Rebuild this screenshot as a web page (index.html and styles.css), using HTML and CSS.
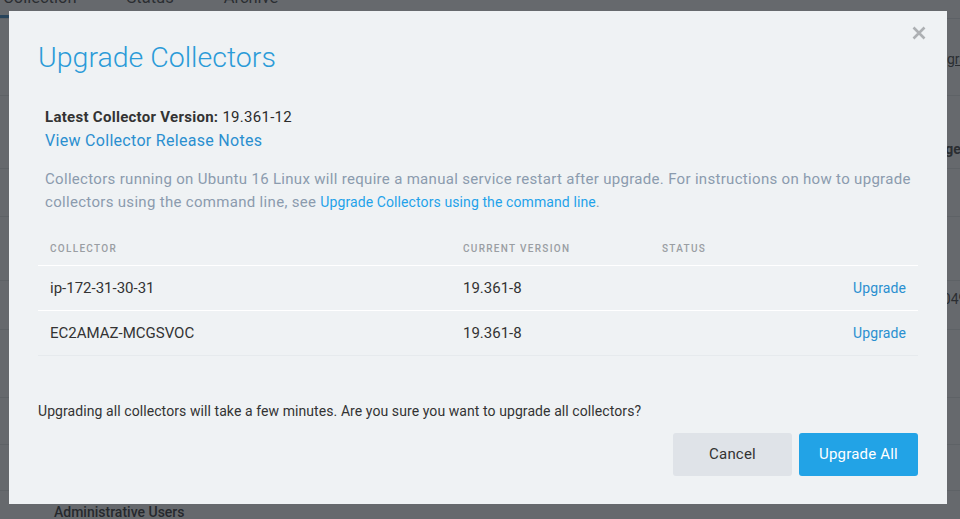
FILE: index.html
```html
<!DOCTYPE html>
<html>
<head>
<meta charset="utf-8">
<link rel="stylesheet" href="styles.css">
</head>
<body>
<div class="page">
  <div class="tabs">
    <span class="tab active">Collection</span>
    <span class="tab">Status</span>
    <span class="tab">Archive</span>
  </div>
  <div class="bg-rows">
    <div class="bg-row r1"><span>Upgrade</span></div>
    <div class="bg-row r2"><span>Changes</span></div>
    <div class="bg-row r3"></div>
    <div class="bg-row r4"></div>
    <div class="bg-row r5"><span>2049</span></div>
    <div class="bg-row r6"></div>
    <div class="bg-row r7"></div>
    <div class="bg-row r8"></div>
  </div>
  <div class="bg-footer">Administrative Users</div>
</div>

<div class="overlay"></div>

<div class="modal">
  <button class="close" aria-label="Close">
    <svg width="14" height="14" viewBox="0 0 14 14"><path d="M1.5 1.5L12.5 12.5M12.5 1.5L1.5 12.5" stroke="#adb0b3" stroke-width="2.6" stroke-linecap="butt"/></svg>
  </button>
  <h1 class="title">Upgrade Collectors</h1>
  <div class="info">
    <div class="version"><b>Latest Collector Version:</b> 19.361-12</div>
    <a class="link big">View Collector Release Notes</a>
    <p class="note">Collectors running on Ubuntu 16 Linux will require a manual service restart after upgrade. For instructions on how to upgrade collectors using the command line, see <a class="link small">Upgrade Collectors using the command line</a>.</p>
  </div>
  <table class="table">
    <thead>
      <tr><th class="c1">Collector</th><th class="c2">Current Version</th><th class="c3">Status</th><th class="c4"></th></tr>
    </thead>
    <tbody>
      <tr><td>ip-172-31-30-31</td><td>19.361-8</td><td></td><td class="act"><a class="link">Upgrade</a></td></tr>
      <tr class="last"><td>EC2AMAZ-MCGSVOC</td><td>19.361-8</td><td></td><td class="act"><a class="link">Upgrade</a></td></tr>
    </tbody>
  </table>
  <p class="confirm">Upgrading all collectors will take a few minutes. Are you sure you want to upgrade all collectors?</p>
  <div class="actions">
    <button class="btn cancel">Cancel</button>
    <button class="btn primary">Upgrade All</button>
  </div>
</div>
</body>
</html>
```

FILE: styles.css
```css
* { box-sizing: border-box; }
html, body { margin: 0; padding: 0; }
body {
  width: 960px;
  height: 519px;
  overflow: hidden;
  font-family: Roboto, "Liberation Sans", sans-serif;
  background: #ffffff;
  position: relative;
}
.page {
  height: 519px;
  display: flex;
  flex-direction: column;
}
.tabs {
  display: flex;
  gap: 50px;
  height: 20px;
  padding-left: 3px;
  border-bottom: 1px solid #dfe2e5;
  align-items: flex-start;
}
.tab {
  font-size: 16.5px;
  color: #333;
  line-height: 12px;
  margin-top: -8px;
  height: 26px;
  border-bottom: 3px solid transparent;
}
.tab.active { border-bottom-color: #2a7fc0; margin-left: -3px; padding-left: 3px; }
.bg-rows {
  display: flex;
  flex-direction: column;
}
.bg-row {
  border-bottom: 1px solid #e2e5e8;
  font-size: 14px;
  color: #333;
  display: flex;
  align-items: center;
  white-space: nowrap;
}
.bg-row.r1 { height: 77px; padding-top: 4px; }
.bg-row.r1 span { margin-left: 930px; text-decoration: underline; }
.bg-row.r2 { height: 73px; align-items: flex-end; padding-bottom: 11px; }
.bg-row.r2 span { margin-left: 913px; font-weight: 700; }
.bg-row.r3 { height: 48px; }
.bg-row.r4 { height: 64px; }
.bg-row.r5 { height: 49px; align-items: flex-start; padding-top: 10px; }
.bg-row.r5 span { margin-left: 935px; }
.bg-row.r6 { height: 68px; }
.bg-row.r7 { height: 47px; }
.bg-row.r8 { height: 46px; }
.bg-footer {
  padding-left: 54px;
  margin-top: 12px;
  font-size: 14px;
  font-weight: 500;
  color: #222;
  line-height: 18px;
}
.overlay {
  position: absolute;
  inset: 0;
  background: rgba(40, 43, 50, 0.71);
}
.modal {
  position: absolute;
  left: 9px;
  top: 11px;
  width: 938px;
  height: 493px;
  background: #eff2f4;
  padding: 30px 29px 28px 29px;
  display: flex;
  flex-direction: column;
}
.close {
  position: absolute;
  right: 21px;
  top: 15px;
  border: 0;
  background: none;
  padding: 0;
  width: 14px;
  height: 14px;
  margin: 0;
}
.close svg { display: block; }
.title {
  margin: 0;
  font-size: 28.5px;
  line-height: 34px;
  font-weight: 300;
  color: #2b9bd8;
}
.info {
  padding-left: 7px;
  margin-top: 31px;
  display: flex;
  flex-direction: column;
}
.version {
  font-size: 15px;
  line-height: 23px;
  color: #2b2b2b;
  letter-spacing: 0.28px;
}
.version b { font-weight: 700; color: #333; }
.link {
  color: #2a8fd0;
  text-decoration: none;
}
.link.big {
  font-size: 16px;
  line-height: 24px;
  letter-spacing: 0.3px;
}
.link.small {
  font-size: 14px;
  color: #1fa2ea;
  letter-spacing: 0.1px;
}
.note {
  margin: 15px 0 0 0;
  font-size: 15px;
  line-height: 23px;
  color: #8b9bae;
  letter-spacing: 0.31px;
}
.table {
  margin-top: 17px;
  width: 880px;
  border-collapse: collapse;
}
.table th {
  text-align: left;
  font-size: 10px;
  font-weight: 500;
  letter-spacing: 1.3px;
  text-transform: uppercase;
  color: #9a9ea3;
  height: 34px;
  padding: 2px 12px 0 12px;
  border-bottom: 1px solid #ffffff;
  vertical-align: middle;
}
.table th.c1 { width: 413px; }
.table th.c2 { width: 199px; }
.table td {
  font-size: 15px;
  color: #333;
  height: 45px;
  padding: 0 12px;
  border-bottom: 1px solid #ffffff;
  vertical-align: middle;
}
.table tr.last td { border-bottom-color: #e6eaed; }
.table td.act { text-align: right; }
.table td.act .link { font-size: 14px; letter-spacing: 0.1px; }
.confirm {
  margin: 45px 0 0 0;
  font-size: 14px;
  line-height: 20px;
  color: #333;
  letter-spacing: 0.08px;
}
.actions {
  margin-top: 12px;
  display: flex;
  justify-content: flex-end;
  gap: 7px;
}
.btn {
  width: 119px;
  height: 43px;
  border: 0;
  border-radius: 3px;
  font-family: Roboto, "Liberation Sans", sans-serif;
  font-size: 15px;
  letter-spacing: 0.2px;
  cursor: pointer;
}
.btn.cancel { background: #dfe3e8; color: #333; }
.btn.primary { background: #22a3e6; color: #fff; }
```
